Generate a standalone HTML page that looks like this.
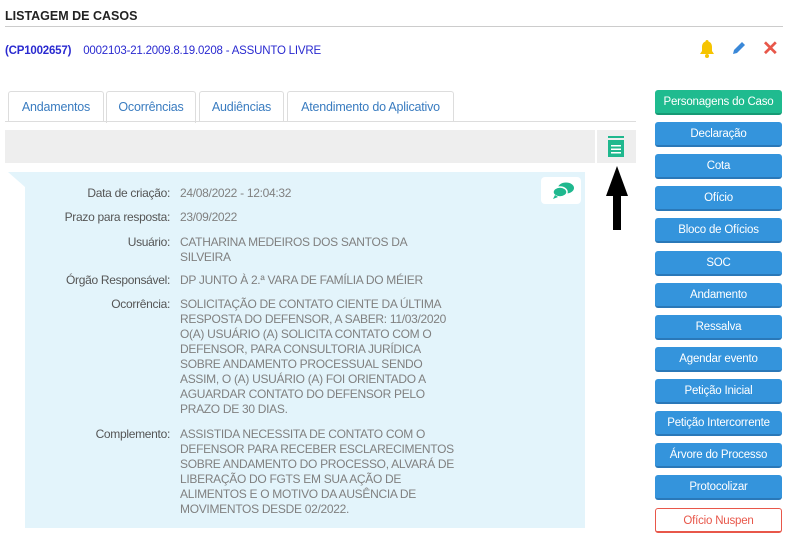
<!DOCTYPE html>
<html><head><meta charset="utf-8"><style>
*{box-sizing:border-box;margin:0;padding:0}
body{width:795px;height:540px;background:#fff;font-family:"Liberation Sans",Arial,sans-serif;position:relative;overflow:hidden;color:#555}
.abs{position:absolute}
h1{position:absolute;left:5px;top:9px;font-size:12.5px;font-weight:bold;color:#222}
.hr{left:5px;top:26px;width:778px;height:1px;background:#ccc}
.case{left:5px;top:45px;font-size:11.5px;color:#2a2ad0;letter-spacing:-0.2px}
.tab{position:absolute;top:91px;height:31px;border:1px solid #ddd;border-bottom:none;border-radius:3px 3px 0 0;font-size:12.5px;color:#3a7cc0;text-align:center;line-height:30px;background:#fff;letter-spacing:-0.2px}
.btn{position:absolute;left:655px;width:127px;height:25px;border-radius:3px;background:#3494dc;color:#fff;font-size:11.5px;text-align:center;line-height:24px;border-bottom:2px solid #2a78b8;letter-spacing:-0.2px;white-space:nowrap}
.row{position:absolute;left:8px;font-size:12px;line-height:15px;letter-spacing:-0.3px;white-space:nowrap}
.row .l{position:absolute;left:0;width:162px;text-align:right;color:#555}
.row .v{position:absolute;left:172px;color:#808080}
</style></head><body>
<h1>LISTAGEM DE CASOS</h1>
<div class="abs hr"></div>
<div class="abs case"><b>(CP1002657)</b>&nbsp;&nbsp;&nbsp; 0002103-21.2009.8.19.0208 - ASSUNTO LIVRE</div>
<svg class="abs" style="left:697px;top:39px" width="20" height="20" viewBox="0 0 20 20"><path d="M10 1a1.5 1.5 0 0 1 1.5 1.5C14 3.3 15 5.5 15 8v4l2 3H3l2-3V8c0-2.5 1-4.7 3.5-5.5A1.5 1.5 0 0 1 10 1z" fill="#f6c400"/><circle cx="10" cy="17" r="2" fill="#f6c400"/></svg>
<svg class="abs" style="left:731px;top:40px" width="16" height="16" viewBox="0 0 16 16"><path d="M2 14l1-4 8-8 3 3-8 8z" fill="#3a88d8"/></svg>
<div class="abs" style="left:762px;top:36px;color:#e8574a;font-size:20px;font-weight:bold">✕</div>

<div class="tab" style="left:8px;width:96px">Andamentos</div>
<div class="tab" style="left:106px;width:90px;height:32px">Ocorrências</div>
<div class="tab" style="left:199px;width:85px">Audiências</div>
<div class="tab" style="left:287px;width:167px">Atendimento do Aplicativo</div>
<div class="abs" style="left:5px;top:121px;width:631px;height:1px;background:#ddd"></div>
<div class="abs" style="left:5px;top:130px;width:590px;height:33px;background:#eee"></div>
<div class="abs" style="left:597px;top:130px;width:39px;height:33px;background:#eee"></div>
<svg class="abs" style="left:607px;top:136px" width="18" height="22" viewBox="0 0 18 22"><rect x="1" y="0" width="16" height="2" fill="#1fb88e"/><rect x="1" y="4" width="16" height="17" fill="#1fb88e"/><rect x="4" y="9" width="10" height="1.5" fill="#fff"/><rect x="4" y="12.5" width="10" height="1.5" fill="#fff"/><rect x="4" y="16" width="10" height="1.5" fill="#fff"/></svg>
<svg class="abs" style="left:605px;top:166px" width="24" height="64" viewBox="0 0 24 64"><path d="M12 0L23 30H16V64H8V30H1z" fill="#000"/></svg>

<div class="abs" style="left:8px;top:172px;width:577px;height:356px;background:#e3f4fb;clip-path:polygon(0 0,100% 0,100% 100%,17px 100%,17px 15px)"></div>
<div class="abs" style="left:541px;top:177px;width:40px;height:27px;background:#fff;border-radius:4px"></div>
<svg class="abs" style="left:551px;top:182px" width="24" height="18" viewBox="0 0 24 18"><ellipse cx="15" cy="6" rx="8" ry="5.5" fill="#1fb88e"/><ellipse cx="9" cy="10" rx="7" ry="5" fill="#1fb88e" stroke="#fff" stroke-width="1.5"/><path d="M4 13l-2 4 5-2z" fill="#1fb88e"/></svg>

<div class="row" style="top:186px"><span class="l">Data de criação:</span><span class="v">24/08/2022 - 12:04:32</span></div>
<div class="row" style="top:210px"><span class="l">Prazo para resposta:</span><span class="v">23/09/2022</span></div>
<div class="row" style="top:235px"><span class="l">Usuário:</span><span class="v">CATHARINA MEDEIROS DOS SANTOS DA<br>SILVEIRA</span></div>
<div class="row" style="top:273px"><span class="l">Órgão Responsável:</span><span class="v">DP JUNTO À 2.ª VARA DE FAMÍLIA DO MÉIER</span></div>
<div class="row" style="top:297px"><span class="l">Ocorrência:</span><span class="v">SOLICITAÇÃO DE CONTATO CIENTE DA ÚLTIMA<br>RESPOSTA DO DEFENSOR, A SABER: 11/03/2020<br>O(A) USUÁRIO (A) SOLICITA CONTATO COM O<br>DEFENSOR, PARA CONSULTORIA JURÍDICA<br>SOBRE ANDAMENTO PROCESSUAL SENDO<br>ASSIM, O (A) USUÁRIO (A) FOI ORIENTADO A<br>AGUARDAR CONTATO DO DEFENSOR PELO<br>PRAZO DE 30 DIAS.</span></div>
<div class="row" style="top:427px"><span class="l">Complemento:</span><span class="v">ASSISTIDA NECESSITA DE CONTATO COM O<br>DEFENSOR PARA RECEBER ESCLARECIMENTOS<br>SOBRE ANDAMENTO DO PROCESSO, ALVARÁ DE<br>LIBERAÇÃO DO FGTS EM SUA AÇÃO DE<br>ALIMENTOS E O MOTIVO DA AUSÊNCIA DE<br>MOVIMENTOS DESDE 02/2022.</span></div>

<div class="btn" style="top:90px;background:#1fbb8f;border-bottom-color:#169a74">Personagens do Caso</div>
<div class="btn" style="top:122px">Declaração</div>
<div class="btn" style="top:154px">Cota</div>
<div class="btn" style="top:186px">Ofício</div>
<div class="btn" style="top:218px">Bloco de Ofícios</div>
<div class="btn" style="top:251px">SOC</div>
<div class="btn" style="top:283px">Andamento</div>
<div class="btn" style="top:315px">Ressalva</div>
<div class="btn" style="top:347px">Agendar evento</div>
<div class="btn" style="top:379px">Petição Inicial</div>
<div class="btn" style="top:411px">Petição Intercorrente</div>
<div class="btn" style="top:443px">Árvore do Processo</div>
<div class="btn" style="top:475px">Protocolizar</div>
<div class="btn" style="top:508px;background:#fff;color:#e8574a;border:1px solid #e8574a;border-bottom:2px solid #e8574a">Ofício Nuspen</div>
</body></html>
